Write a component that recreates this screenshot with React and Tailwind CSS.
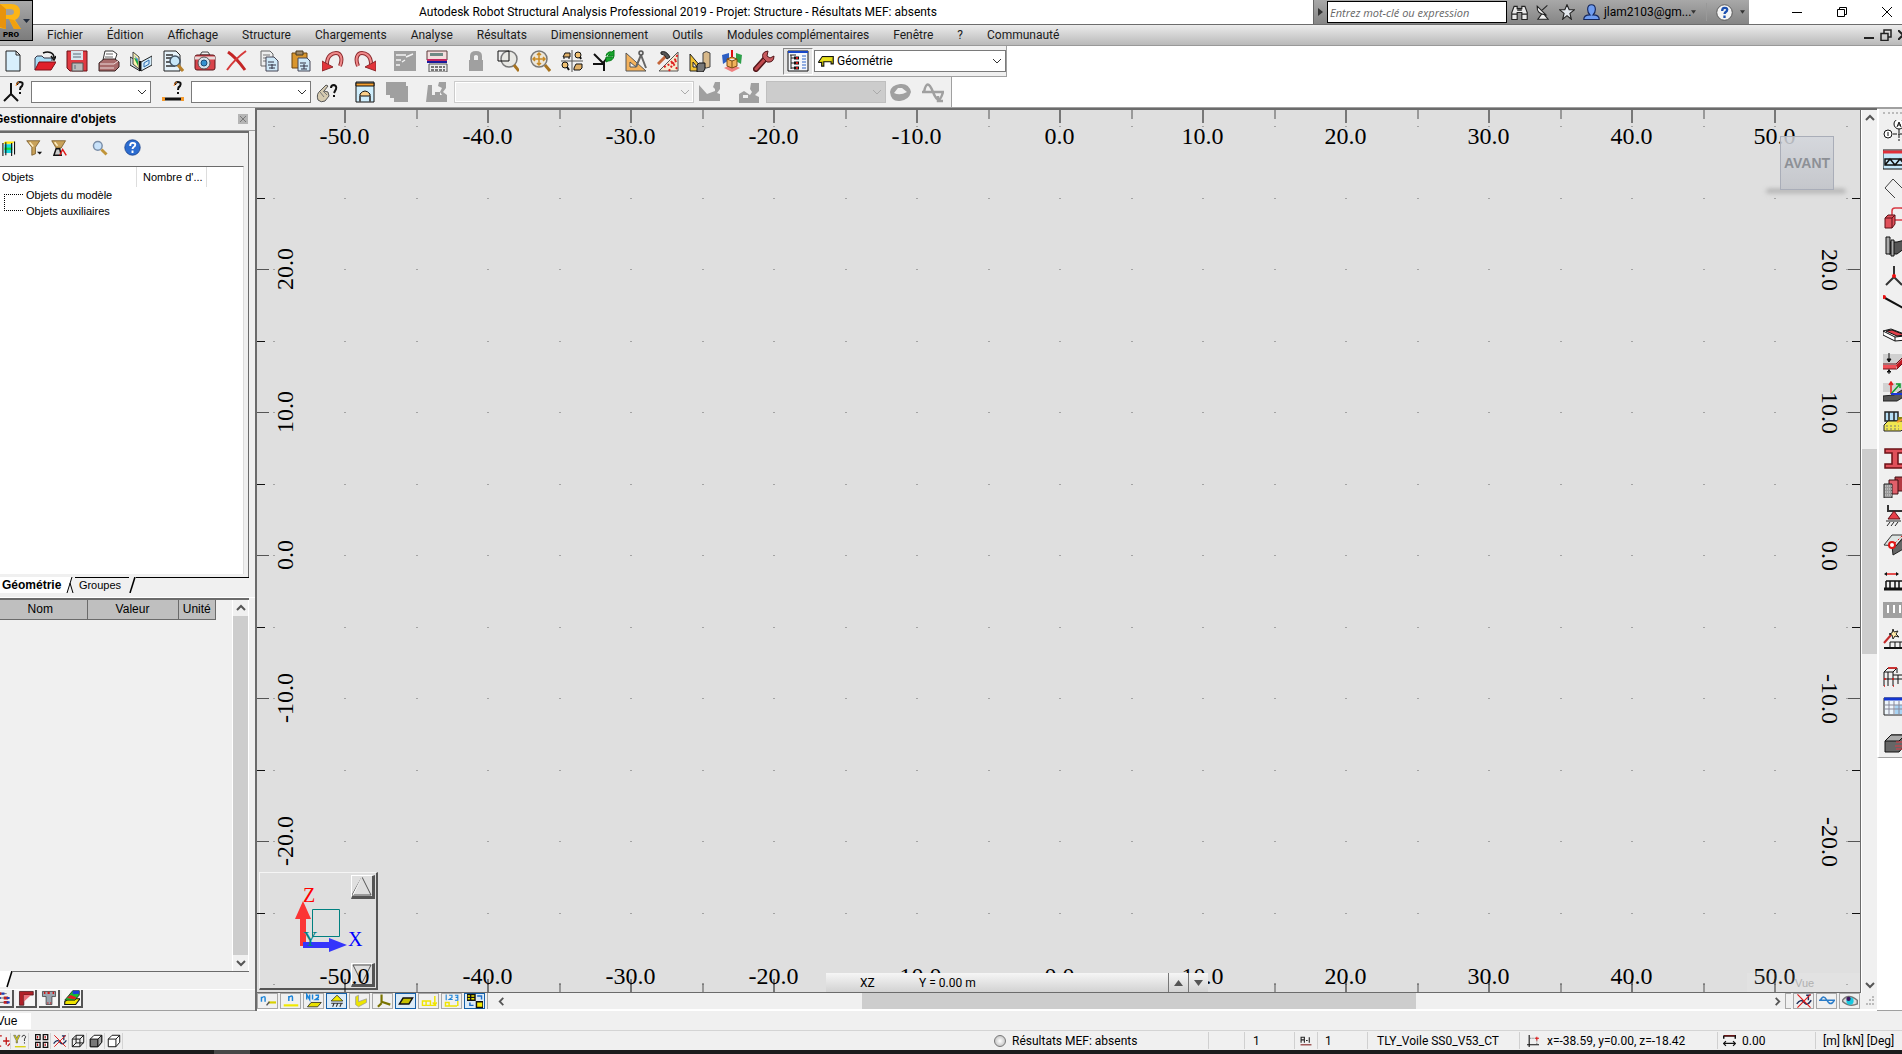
import { useState } from "react";

const MENUS = [
  "Fichier", "Édition", "Affichage", "Structure", "Chargements", "Analyse", "Résultats",
  "Dimensionnement", "Outils", "Modules complémentaires", "Fenêtre", "?", "Communauté",
];

const GREY = "#a0a0a0";

// every glyph is drawn on a 22x22 grid
const GLYPHS = {
  new: <path d="M4 1h10l4 4v16H4z M14 1v4h4" fill="#d8effc" stroke="#222" />,
  open: (
    <>
      <path d="M1 20V8l2-2h5l2 2h8v3" fill="#a9dcf5" stroke="#334" />
      <path d="M1 20l4-8h17l-5 8z" fill="#e0202c" stroke="#801018" />
      <path d="M9 3c5-2 11-1 11 5M17 6l3 4 2-4" fill="none" stroke="#111" strokeWidth="1.5" />
    </>
  ),
  save: (
    <>
      <path d="M1 1h20v20H4l-3-3z" fill="#e03a42" stroke="#6b1016" />
      <path d="M5 1h12v9H5z" fill="#d9e6ee" />
      <path d="M6 13h11v8H6z" fill="#bbb" stroke="#555" />
      <path d="M7 4h8M7 7h8M9 15v4" stroke="#5c6b78" />
    </>
  ),
  print: (
    <>
      <path d="M7 1h8l4 3-2 6H5z" fill="#fff" stroke="#333" />
      <path d="M8 4h7M7 7h8" stroke="#666" />
      <path d="M1 13l5-4h11l4 3v5l-4 4H1z" fill="#a86b6b" stroke="#3a2222" />
      <path d="M2 14h14l4-3M2 18h14" stroke="#eedcdc" fill="none" />
    </>
  ),
  book: (
    <>
      <path d="M0 7l10 5v9L0 15z" fill="#cfd8de" stroke="#222" />
      <path d="M3 2l6 5v12l-6-5z" fill="#fff3b0" stroke="#444" />
      <path d="M4 8l4 8V9z" fill="#1dad3a" />
      <path d="M4 5l4 4v3z" fill="#4b8fe0" />
      <path d="M11 12l11-6v9l-11 6z" fill="#d4ecfa" stroke="#222" />
      <path d="M14 13l5-3v4l-5 3z" fill="none" stroke="#2f6fb0" />
      <path d="M10 11v10" stroke="#111" strokeWidth="2" />
    </>
  ),
  preview: (
    <>
      <path d="M2 1h12l4 4v16H2z" fill="#e6f3fb" stroke="#222" />
      <path d="M4 5h7M4 8h6M4 12h5M4 16h9" stroke="#333" strokeWidth="1.5" />
      <circle cx="13" cy="11" r="5" fill="#c6e6f8" stroke="#456" strokeWidth="1.5" />
      <path d="M16 15l5 6" stroke="#b9812c" strokeWidth="3" />
    </>
  ),
  camera: (
    <>
      <path d="M6 5l2-3h6l2 3z" fill="#eee" stroke="#444" />
      <rect x="1" y="5" width="20" height="15" rx="2" fill="#d9434a" stroke="#58161a" />
      <path d="M1 8h20" stroke="#e8d8d8" strokeWidth="3" />
      <circle cx="10" cy="13" r="6" fill="#d8e2ea" stroke="#555" />
      <circle cx="10" cy="13" r="3" fill="#3490cf" stroke="#1b4b75" />
    </>
  ),
  cross: (
    <>
      <path d="M2 2c6 4 12 11 17 18" stroke="#c42626" strokeWidth="3" fill="none" />
      <path d="M20 1C13 6 6 13 1 20" stroke="#d63a3a" strokeWidth="2" fill="none" />
    </>
  ),
  copy: (
    <>
      <path d="M3 1h9l3 3v12H3z" fill="#eee" stroke="#666" />
      <path d="M5 5h7M5 8h7M5 11h4" stroke="#777" />
      <path d="M8 7h8l4 4v10H8z" fill="#cfe9f8" stroke="#445" />
      <path d="M10 12h6M10 15h8M11 18h6M14 14v5" stroke="#334" />
    </>
  ),
  paste: (
    <>
      <path d="M2 3h15v15H2z" fill="#d9962e" stroke="#6b4510" />
      <path d="M6 1h7v4H6z" fill="#a08a6a" stroke="#4b3a1e" />
      <path d="M8 8h9l3 3v10H8z" fill="#cfe9f8" stroke="#445" />
      <path d="M10 13h6M10 16h8M11 19h6M14 14v5" stroke="#334" />
    </>
  ),
  undo: (
    <>
      <path d="M5 14C5 5 11 3 14 3c5 0 7 6 4 13" fill="none" stroke="#8c2a2e" strokeWidth="4" />
      <path d="M5 14C5 5 11 3 14 3c5 0 7 6 4 13" fill="none" stroke="#f08a8a" strokeWidth="2" />
      <path d="M0 11v10l11-4z" fill="#e2343a" stroke="#8c2a2e" />
    </>
  ),
  redo: (
    <>
      <path d="M17 14C17 5 11 3 8 3 3 3 1 9 4 16" fill="none" stroke="#8c2a2e" strokeWidth="4" />
      <path d="M17 14C17 5 11 3 8 3 3 3 1 9 4 16" fill="none" stroke="#f08a8a" strokeWidth="2" />
      <path d="M22 11v10l-11-4z" fill="#e2343a" stroke="#8c2a2e" />
    </>
  ),
  sheetOff: (
    <>
      <path d="M0 1h22v20H0z" fill={GREY} />
      <path d="M2 5h10M2 10h5M2 15h4M12 7l7-3M8 12l3-2" stroke="#f3f3f3" strokeWidth="1.5" />
    </>
  ),
  calc: (
    <>
      <path d="M1 1h20v9H1z" fill="#f3dede" stroke="#5c3a3a" />
      <path d="M4 3h13v3H4z" fill="#6f8a85" />
      <path d="M1 9h20v2H1z" fill="#c6265e" />
      <path d="M1 12h20" stroke="#1b1b9c" strokeWidth="2" />
      <path d="M3 14h18v8H3z" fill="#eee" stroke="#555" />
      <path d="M5 17h14M5 20h14" stroke="#777" strokeDasharray="3 1" strokeWidth="2" />
    </>
  ),
  lock: <path d="M4 21V10h1V6q0-5 6-5t6 5v4h1v11z M9 10h4V6q-2-2-4 0z" fill={GREY} fillRule="evenodd" />,
  zoomWin: (
    <>
      <circle cx="12" cy="9" r="8" fill="#e8e8e4" stroke="#777" strokeWidth="1.5" />
      <path d="M1 1h11v10H1z" fill="none" stroke="#111" />
      <path d="M17 15l5 6" stroke="#a8731f" strokeWidth="3" />
    </>
  ),
  zoomAll: (
    <>
      <circle cx="10" cy="9" r="8" fill="#ece6d8" stroke="#777" strokeWidth="1.5" />
      <path d="M10 3v12M4 9h12M8 5l2-2 2 2M8 13l2 2 2-2M6 7L4 9l2 2M14 7l2 2-2 2" stroke="#c98a24" strokeWidth="1.5" fill="none" />
      <path d="M16 15l5 6" stroke="#a8731f" strokeWidth="3" />
    </>
  ),
  views: (
    <>
      <path d="M0 11h22M11 0v22" stroke="#555" />
      <path d="M2 7l2-4h5v4z M3 7v2M8 7v2M13 18l2-4h6v4l-2 2h-6z" fill="#e0b068" stroke="#111" />
      <circle cx="17" cy="5" r="3" fill="#f0c070" stroke="#111" />
      <circle cx="4" cy="15" r="3" fill="#f0c070" stroke="#111" />
      <path d="M6 17l2 3M19 7l1 2" stroke="#111" strokeWidth="2" />
    </>
  ),
  rotate: (
    <>
      <path d="M1 4l9 9M0 14h12M11 12v9M10 13l4-5" stroke="#111" strokeWidth="2" />
      <path d="M13 6q1-5 6-4l2-2v6h-6l2-2M21 6q-1 5-6 5l-2 1V7h6" fill="#16a52c" stroke="#0b7d1c" />
    </>
  ),
  compass: (
    <>
      <path d="M1 3v18h20z M5 12v5h6z" fill="#f4b25c" fillRule="evenodd" stroke="#555" />
      <path d="M16 5l-5 12M16 5l5 13" stroke="#666" strokeWidth="2" />
      <circle cx="16" cy="3" r="2" fill="#ddd" stroke="#555" strokeWidth="1.5" />
    </>
  ),
  hammer: (
    <>
      <path d="M2 21L21 2v19z" fill="#f7ead0" stroke="#555" />
      <path d="M7 17l14-7M12 21l9-17M14 11l7 9" stroke="#d22" strokeDasharray="2 2" strokeWidth="2" />
      <path d="M1 14l9-9" stroke="#c4663a" strokeWidth="3" />
      <path d="M4 2q5-2 9 5l-3 2Q8 4 4 4z" fill="#555" stroke="#222" />
    </>
  ),
  solids: (
    <>
      <path d="M1 4l11 13v4H1z M4 12v5h4z" fill="#f2c233" fillRule="evenodd" stroke="#222" />
      <path d="M14 3q3-3 7 0v14q-4 2-7 0z" fill="#d8b98a" stroke="#444" />
      <path d="M8 15l2-2h6v6l-2 3H8z" fill="#777" stroke="#111" />
    </>
  ),
  cube3d: (
    <>
      <path d="M1 5l7-2v7l-6 4z" fill="#2c5fc4" />
      <path d="M21 5l-6-2v8l5 3z" fill="#2ea04a" />
      <path d="M3 18l8-4 8 4-8 4z" fill="#f08080" />
      <path d="M6 9l5-2 5 2v7l-5 2-5-2z M6 9l5 2 5-2M11 11v7" fill="#f2b25a" stroke="#7a4a12" />
      <path d="M11 0v7" stroke="#e01010" strokeWidth="2" />
    </>
  ),
  wrench: (
    <>
      <path d="M3 19l9-10" stroke="#54171a" strokeWidth="6" strokeLinecap="round" />
      <path d="M3 19l9-10" stroke="#c04a4e" strokeWidth="3" strokeLinecap="round" />
      <path d="M10 8q-2-6 5-7l-1 5 3 2 4-2q0 7-7 6z" fill="#c75a5e" stroke="#54171a" />
    </>
  ),
  manager: (
    <>
      <path d="M1 1h20v20H1z" fill="#f4f7fb" stroke="#111" />
      <path d="M1 2h20" stroke="#1746c8" strokeWidth="2" />
      <path d="M3 5h6M4 5v14M4 8h4M4 13h4M4 18h4" stroke="#222" />
      <path d="M7 8h5M7 13h5M7 18h5" stroke="#111" strokeWidth="3" />
      <path d="M9 8h2M9 13h2M9 18h2" stroke="#d01a1a" strokeWidth="2" />
      <path d="M15 6h4M15 9h4M15 12h4M15 15h4M15 18h4" stroke="#2c62c8" />
    </>
  ),
  nodeHelp: (
    <>
      <path d="M8 2v11M8 13l-7 7M8 13l7 7" stroke="#111" strokeWidth="2" fill="none" />
      <path d="M14 4q0-3 3-3 4 0 2 4-2 1-2 4M17 11v2" stroke="#111" strokeWidth="2" fill="none" />
      <path d="M13 5q0-3 3-4" stroke="#f08020" fill="none" />
    </>
  ),
  barHelp: (
    <>
      <path d="M1 18h20" stroke="#111" strokeWidth="3" />
      <path d="M0 16h3v4H0zM19 16h3v4h-3z" fill="#f59a2c" />
      <path d="M13 4q0-3 3-3 4 0 2 4-2 1-2 4M16 11v2" stroke="#111" strokeWidth="2" fill="none" />
      <path d="M12 5q0-3 3-4" stroke="#f08020" fill="none" />
    </>
  ),
  handHelp: (
    <>
      <path d="M2 19q-2-6 2-9l6-6 2 1-4 5 4 1 1 4-4 5q-4 2-7-1z" fill="#d6cbb0" stroke="#555" />
      <path d="M4 11l4 5M7 10l4 4" stroke="#777" />
      <path d="M15 7q0-3 3-3 3 1 2 4l-2 4M18 14v2" stroke="#111" strokeWidth="2" fill="none" />
    </>
  ),
  house: (
    <>
      <path d="M2 1h18v20H2z" fill="#cfeefc" stroke="#111" />
      <path d="M2 2h18v3H2z" fill="#f5a030" stroke="#111" />
      <path d="M6 15v-2q5-6 10 0v2z" fill="#fbd08a" stroke="#111" />
      <path d="M6 15v6M16 15v6" stroke="#555" strokeWidth="2" />
    </>
  ),
  planeOff: <path d="M0 1h20v4h2v16H8v-4H4v-3H0z" fill={GREY} />,
  caseOff: <path d="M2 4h4v10h3v-3h5v3h2l-2-3 2-4-4-2 1-4h7v6l-3 4 4 3v7H0z" fill={GREY} />,
  modeOff: <path d="M1 4l8 9 8-3v-2l-2-2 2-5h5v7l-3 4 3 1v7H1z" fill={GREY} />,
  compOff: <path d="M1 13l5-3 6 4 2-3-2-3 1-6h8v8l-4 4 4 2v6H1z M5 14h5v3H5z" fill={GREY} fillRule="evenodd" />,
  massOff: <path d="M1 11Q2 4 11 3t11 8q-2 8-11 9T1 11z M5 12q6 3 13-1l-5-4H9z" fill={GREY} fillRule="evenodd" />,
  waveOff: <path d="M0 11h22M2 11Q5-4 11 11t10 0M16 15v5h5" stroke={GREY} strokeWidth="2.5" fill="none" />,
  axes: (
    <>
      <circle cx="5" cy="14" r="4" fill="#fff" stroke="#111" />
      <path d="M5 12v4M10 14h12M16 9v12" stroke="#111" strokeDasharray="4 1" />
      <circle cx="16" cy="4" r="5" fill="#fff" stroke="#111" />
      <path d="M14 7l2-5 2 5M15 5h3" stroke="#111" fill="none" />
    </>
  ),
  truss: (
    <>
      <path d="M0 1h22v19H0z" fill="#c6e8fa" stroke="#111" />
      <path d="M0 2h22v2H0z" fill="#e0303a" stroke="#e0303a" />
      <path d="M2 10h20v6H2zM2 16l5-6 5 6 5-6 5 6" fill="none" stroke="#111" strokeWidth="1.5" />
    </>
  ),
  poly: <path d="M12 20L2 10l8-9 12 12" fill="none" stroke="#444" />,
  extrude: (
    <>
      <rect x="9" y="1" width="12" height="12" rx="3" fill="none" stroke="#d83a44" strokeWidth="1.5" />
      <path d="M2 11l3-3h7v9l-3 4H2z M2 11h7v10M9 11l3-3" fill="#e0505a" stroke="#5c1016" />
    </>
  ),
  slabs: (
    <>
      <path d="M6 6h8l8-2v8l-8 6H6z" fill="#555" stroke="#111" />
      <path d="M3 1h4v17H3zM8 4h3v16H8z" fill="#aaa" stroke="#111" />
    </>
  ),
  node: (
    <>
      <path d="M11 1v11M11 12l-8 8M11 12l8 8" stroke="#333" strokeWidth="2" />
      <circle cx="11" cy="11" r="2" fill="#f01010" />
    </>
  ),
  bar: (
    <>
      <path d="M2 4l20 11" stroke="#111" strokeWidth="2" />
      <circle cx="1" cy="3" r="2" fill="#e81010" />
    </>
  ),
  panel: (
    <>
      <path d="M0 8l8-2 16 6v5l-12 1L0 12z" fill="#fff" stroke="#111" />
      <path d="M3 8l6-1 13 5-8 1z" fill="#e0404a" stroke="#111" />
      <path d="M0 8l12 6 10-1M12 14v4" stroke="#111" />
    </>
  ),
  thickness: (
    <>
      <path d="M0 2h22v6l-8 6H0z" fill="#d0d0d0" />
      <path d="M0 13h13v4H0z" fill="#f05058" />
      <path d="M13 13l9-9v5l-8 8z" fill="#c01820" />
      <path d="M0 12h13l8-8M0 17h14l8-8" stroke="#701018" fill="none" />
      <path d="M6 1v7M4 7l2 3 2-3zM6 17v5M4 20l2-2 2 2z" stroke="#111" fill="#111" />
    </>
  ),
  local: (
    <>
      <path d="M0 2h22v9H0z" fill="#d2d2d2" />
      <path d="M0 15l11-1 8-5 3 1v5l-8 5H0z" fill="#555" stroke="#222" />
      <path d="M8 13V2M6 4l2-3 2 3" stroke="#e02020" fill="none" strokeWidth="1.5" />
      <path d="M8 13l9-10M13 3h4v4" stroke="#12a030" fill="none" strokeWidth="1.5" />
      <path d="M8 13h14" stroke="#1a36d8" strokeWidth="2" />
    </>
  ),
  material: (
    <>
      <path d="M2 2h13v9H2zM6 2v9M11 2v9" fill="#b6def5" stroke="#222" strokeWidth="1.5" />
      <path d="M15 7h7v6h-7z" fill="#8a8410" />
      <path d="M1 15l4-4h17v6l-4 4H1z" fill="#f0e650" stroke="#222" />
      <path d="M3 16h13M3 19h13" stroke="#777" strokeDasharray="2 2" />
      <path d="M14 12l8-4" stroke="#f59a2c" strokeWidth="2" />
    </>
  ),
  section: <path d="M2 2h20v4h-7v11h7v4H2v-4h7V6H2z" fill="#e0505a" stroke="#6b1016" strokeWidth="1.5" />,
  plates: (
    <>
      <path d="M12 1h10v14H12z" fill="#b43a42" stroke="#401014" />
      <path d="M6 4h9v14H6z" fill="#e0606a" stroke="#401014" />
      <path d="M1 8h8v14H1z" fill="#999" stroke="#222" />
      <path d="M2 10h7M2 13h7M2 16h7M2 19h7" stroke="#ddd" strokeDasharray="1 1" />
    </>
  ),
  support: (
    <>
      <path d="M5 0v6h17" stroke="#333" strokeWidth="2" fill="none" />
      <path d="M11 6l6 8H5z" fill="#e8404a" stroke="#5c1016" />
      <path d="M3 16h15M7 17l-3 4M11 17l-3 4M15 17l-3 4" stroke="#222" />
    </>
  ),
  release: (
    <>
      <path d="M1 11L9 1h13l-9 11z" fill="#dde4e2" stroke="#333" />
      <path d="M9 12h4l9-10v12l-12 7z" fill="#666" stroke="#222" />
      <path d="M12 9l8-8" stroke="#e01818" strokeDasharray="2 2" />
      <circle cx="9" cy="11" r="3" fill="#fff" stroke="#e01818" strokeWidth="2" />
    </>
  ),
  loads: (
    <>
      <path d="M3 3h12" stroke="#e01818" strokeWidth="1.5" />
      <path d="M4 1L1 3l3 2zM13 1l3 2-3 2z" fill="#111" />
      <path d="M1 18h21" stroke="#111" strokeWidth="3" />
      <path d="M3 10h18v7M3 10v7M7 10v7M12 10v7M16 10v7M20 3v13" fill="none" stroke="#111" strokeWidth="1.5" />
    </>
  ),
  loadsOff: (
    <>
      <path d="M0 2h22v16H0z" fill={GREY} />
      <path d="M5 5v8M11 5v8M17 5v8" stroke="#fff" strokeWidth="2" />
    </>
  ),
  wizard: (
    <>
      <path d="M1 14l7-8" stroke="#c22a2a" strokeWidth="2" />
      <path d="M10 0l1 3 4-1-2 3 3 3-4-1-2 3-1-4-3-1 3-1z" fill="#ffe9a8" stroke="#222" />
      <path d="M1 19h21" stroke="#111" strokeWidth="2" />
      <path d="M7 18v-5h15M12 13v5M17 13v5" fill="none" stroke="#111" />
    </>
  ),
  frame3d: (
    <>
      <path d="M1 20V6h9v14M1 13h21M5 6v14M15 9v9M10 9h12" fill="none" stroke="#111" />
      <path d="M1 6l4-4h9v5M10 6l4-4" fill="none" stroke="#111" />
      <path d="M5 2h9M1 20h1M10 20h1M1 13h2M9 13h2" stroke="#e01818" strokeWidth="1.5" />
    </>
  ),
  table: (
    <>
      <path d="M1 3h21v17H1z" fill="#eef6fc" stroke="#222" />
      <path d="M1 4h21" stroke="#1436d0" strokeWidth="3" />
      <path d="M12 10h9v9h-9z" fill="#a8d4f4" />
      <path d="M1 10h21M1 14h21M6 6v14M11 6v14M16 6v14" stroke="#889" />
    </>
  ),
  block: (
    <>
      <path d="M2 9l6-6h14v10l-6 7H2z" fill="#666" stroke="#111" />
      <path d="M2 9l6-6h14l-6 6z" fill="#aaa" stroke="#111" />
      <path d="M13 10h9M12 14h10M13 17h9" stroke="#e03a44" />
    </>
  ),
  rack: (
    <>
      <path d="M7 2h13l-3 3H4z" fill="#ffe800" />
      <path d="M6 6h11v5H6zM6 12h11v6H6z" fill="#12d8e0" />
      <path d="M6 12h11" stroke="#12e030" strokeWidth="3" />
      <path d="M4 4v18M8 3v18M16 4v18M20 2v18" stroke="#111" strokeWidth="1.5" />
    </>
  ),
  funnel: (
    <>
      <path d="M1 1h18l-6 9v9l-5 2V10z" fill="#c9a25a" stroke="#6b4c18" />
      <path d="M5 3l5 6" stroke="#fff0c8" strokeWidth="2" />
      <path d="M15 16h7l-3 4z" fill="#111" />
    </>
  ),
  funnelOff: (
    <>
      <path d="M1 1h19l-6 10H7z" fill="#c9a25a" stroke="#6b4c18" />
      <path d="M5 3l4 5" stroke="#fff0c8" strokeWidth="2" />
      <path d="M4 21l3-9h5l2 9z" fill="#ccc" stroke="#111" strokeWidth="2" />
      <path d="M12 21l4-8 5 8" fill="none" stroke="#e01818" strokeWidth="2" />
    </>
  ),
  find: (
    <>
      <circle cx="8" cy="8" r="6" fill="#c8e2fa" stroke="#7a8ea8" strokeWidth="2" />
      <path d="M13 13l7 7" stroke="#c09438" strokeWidth="4" />
    </>
  ),
  help: (
    <>
      <circle cx="11" cy="11" r="10" fill="#2c6cd0" stroke="#123c88" />
      <path d="M8 9q0-4 3-4 5 0 3 4-3 2-3 4M11 15v3" stroke="#fff" strokeWidth="2.5" fill="none" />
    </>
  ),
  layoutCar: (
    <>
      <path d="M1 12l5-7h15v10h-3v-3H8v6H5v-5H1z" fill="#c8c000" stroke="#111" strokeWidth="1.5" />
      <path d="M6 6h14l-2 5H3z" fill="#e8e020" />
    </>
  ),
  nBar: (
    <>
      <path d="M2 12V5M2 7q5-4 5 0v5" stroke="#1c84d8" strokeWidth="2" fill="none" />
      <path d="M12 13h10" stroke="#d8d000" strokeWidth="3" />
      <path d="M9 17l4-5" stroke="#555" strokeWidth="2" />
    </>
  ),
  nLine: (
    <>
      <path d="M8 11V4M8 6q5-4 5 0v5" stroke="#1c84d8" strokeWidth="2" fill="none" />
      <path d="M1 17h20" stroke="#f0e800" strokeWidth="3" />
    </>
  ),
  n12: (
    <>
      <path d="M1 9V2l4 7V2M9 2v7M13 3h4v3l-4 3h5" stroke="#1c84d8" strokeWidth="2" fill="none" />
      <path d="M2 19l5-6h14l-5 6z" fill="#e8e000" stroke="#111" />
    </>
  ),
  supportY: (
    <>
      <path d="M11 3l8 8H3z" fill="#f4ec00" stroke="#111" />
      <path d="M3 14h16M7 14l-2 5M12 14l-2 5M17 14l-2 5" stroke="#333" strokeWidth="1.5" />
    </>
  ),
  angle: <path d="M5 5l4-2v9l11-4v5L9 19l-4-3z" fill="#ece400" stroke="#999" />,
  tripod: <path d="M9 2v12M9 14l-5 5M9 12l12 4" stroke="#7a7400" strokeWidth="3" fill="none" />,
  slabY: <path d="M2 15l5-8h13l-5 8z" fill="#c8c000" stroke="#111" strokeWidth="2" />,
  loadY: <path d="M1 17h20M2 17v-6h5v6M7 11h6v6M19 4v12M16 13l3 3 3-3" stroke="#f0e400" strokeWidth="2" fill="none" />,
  n123: (
    <>
      <path d="M3 2v8M7 3h4v3l-4 3h5M15 3h4v7h-4M16 6h3" stroke="#1c84d8" strokeWidth="1.5" fill="none" />
      <path d="M1 18h17M2 18v-5h5v5M19 11v7" stroke="#f0e400" strokeWidth="2" fill="none" />
    </>
  ),
  swap: (
    <>
      <path d="M0 2h11v8H0zM13 12h9v8h-9z" fill="#f4ec00" stroke="#111" strokeWidth="2" />
      <path d="M5 2v8M0 6h11" stroke="#111" strokeWidth="2" />
      <path d="M14 4h6v5M9 17H4v-4" stroke="#1c6cc8" strokeWidth="2" fill="none" />
    </>
  ),
  axesOff: (
    <>
      <path d="M1 15q6-8 10-2t10-3M14 3h6M17 3v7" stroke="#1c2c58" strokeWidth="2" fill="none" />
      <path d="M2 2l18 18M20 2L2 20" stroke="#e01818" strokeWidth="1.5" />
    </>
  ),
  wave: <path d="M0 10h22M2 10q4-9 9 0t10 0" stroke="#2b7cc8" strokeWidth="2" fill="none" />,
  eye: (
    <>
      <path d="M0 11Q8-1 21 10v5Q10 20 0 11z" fill="#ddd" stroke="#777" strokeWidth="2" />
      <circle cx="11" cy="11" r="5" fill="#18c8e0" />
      <circle cx="9" cy="8" r="3" fill="#401860" />
    </>
  ),
  list: (
    <>
      <path d="M0 5h16M0 11h20M0 17h20" stroke="#444" />
      <path d="M4 5h5M12 11h6M12 17h6" stroke="#c02020" strokeWidth="4" />
      <path d="M9 5h4M16 11h4M16 17h4M4 11h4" stroke="#1c3cb8" strokeWidth="3" />
    </>
  ),
  gusset: (
    <>
      <path d="M2 2h19v5H8v14H2z" fill="#b02028" stroke="#401014" />
      <path d="M8 7h10l-10 9z" fill="#e8707a" />
    </>
  ),
  beamT: (
    <>
      <path d="M2 2h18v7h-5v11H7V9H2z" fill="#9aa4ae" stroke="#333" />
      <path d="M4 4h2M9 4h3M16 4h2M9 18h1M13 18h1" stroke="#d01818" strokeWidth="3" />
    </>
  ),
  layers: (
    <>
      <path d="M1 16l5-4h16l-6 8H1z" fill="#f0e400" stroke="#111" strokeWidth="1.5" />
      <path d="M1 14L12 1h9v6l-6 7z" fill="#18c030" stroke="#111" />
      <path d="M12 1h9v4l-9 1z" fill="#1c3cd8" />
      <path d="M4 11l5-4 8 3-2 3z" fill="#e02020" />
    </>
  ),
  snap: <path d="M0 3h6M13 5v12M8 11h10M2 19h3M15 19l4-4" stroke="#c01818" strokeWidth="2" fill="none" />,
  viewHelp: (
    <>
      <path d="M1 2l4 8v4h2v-4l4-8H8L6 7 4 2z" fill="#e8e000" stroke="#555" />
      <path d="M14 5q1-4 4-3 4 2 0 6v3M18 13v2" stroke="#333" strokeWidth="1.5" fill="none" />
      <path d="M3 20h17" stroke="#d8d000" strokeWidth="2" />
    </>
  ),
  tiles: (
    <>
      <path d="M1 1h7v8H1zM13 1h7v8h-7zM1 13h7v8H1zM13 13h7v8h-7z" fill="#fff" stroke="#111" strokeWidth="2" />
      <path d="M4 3v4M16 3v4M4 15v4M16 15v4" stroke="#b01818" strokeWidth="2" />
    </>
  ),
  wireCube: <path d="M2 8l6-6h12v11l-6 7H2zM2 8h12v12M14 8l6-6M8 2v12h12M8 14l-6 6" fill="none" stroke="#111" strokeWidth="1.5" />,
  darkCube: (
    <>
      <path d="M2 8l6-6h12v11l-6 7H2z" fill="#fff" stroke="#111" strokeWidth="1.5" />
      <path d="M2 8h12v12H2z" fill="#777" stroke="#111" strokeWidth="1.5" />
      <path d="M14 8l6-6v11l-6 7z" fill="#aaa" stroke="#111" strokeWidth="1.5" />
    </>
  ),
  whiteCube: <path d="M2 8l6-6h12v11l-6 7H2zM2 8h12v12M14 8l6-6" fill="#fff" stroke="#111" strokeWidth="1.5" />,
  binoculars: (
    <path d="M4 3h4v3h6V3h4l3 8v9h-7v-9H8v9H1v-9z M8 8h6M1 13h7M14 13h7" fill="#e8e8e8" stroke="#222" strokeWidth="1.5" />
  ),
  dish: (
    <path d="M3 3q-1 11 12 12L3 3zM9 9l8-7M9 14l-5 7h14l-5-6" fill="#f0f0f0" stroke="#222" strokeWidth="1.5" />
  ),
  star: <path d="M11 1l3 7h7l-6 5 2 8-6-5-6 5 2-8-6-5h7z" fill="#e4e8ee" stroke="#222" strokeWidth="1.5" />,
  user: (
    <path d="M11 1q5 0 5 6 0 4-3 7 8 0 8 6H1q0-6 8-6-3-3-3-7 0-6 5-6z" fill="#6f9cf0" stroke="#14265c" strokeWidth="1.5" />
  ),
  helpRound: (
    <>
      <circle cx="11" cy="11" r="10" fill="#f4f4f4" stroke="#444" />
      <path d="M8 9q0-4 3-4 5 0 3 4-3 2-3 4M11 15v3" stroke="#1c50b0" strokeWidth="3" fill="none" />
    </>
  ),
  label: (
    <>
      <path d="M2 14V4h6v10M2 9h6M11 10h3M17 4v10" stroke="#222" strokeWidth="2" fill="none" />
      <path d="M1 18h20" stroke="#802020" strokeWidth="2" />
    </>
  ),
  coords: (
    <>
      <path d="M4 0v22M0 18h22" stroke="#111" strokeWidth="2" />
      <path d="M6 6h12v12" fill="none" stroke="#666" strokeDasharray="2 2" strokeWidth="2" />
      <path d="M15 6h7M18 3v7" stroke="#e01818" strokeWidth="2" />
    </>
  ),
  dims: (
    <>
      <path d="M1 3h20v5M1 3v5" stroke="#111" strokeWidth="3" fill="none" />
      <path d="M2 3h18" stroke="#e01818" />
      <path d="M1 16h20M5 12l-4 4 4 4M17 12l4 4-4 4" stroke="#111" strokeWidth="2" fill="none" />
    </>
  ),
};

function Glyph({ name, className = "size-[22px]" }) {
  return (
    <svg viewBox="0 0 22 22" fill="none" className={`shrink-0 ${className}`} aria-hidden="true">
      {GLYPHS[name]}
    </svg>
  );
}

function Tool({ name, className = "w-8 h-7", size }) {
  return (
    <button aria-label={name} className={`flex shrink-0 items-center justify-center ${className}`}>
      <Glyph name={name} className={size} />
    </button>
  );
}

function Chevron({ dir = "down", className = "size-[10px] text-[#555]", strokeWidth = 2 }) {
  const d = { down: "M1 3l4 4 4-4", up: "M1 7l4-4 4 4", left: "M7 1L3 5l4 4", right: "M3 1l4 4-4 4" }[dir];
  return (
    <svg viewBox="0 0 10 10" className={`shrink-0 ${className}`} fill="none" stroke="currentColor" strokeWidth={strokeWidth} aria-hidden="true">
      <path d={d} />
    </svg>
  );
}

function Combo({ label, className, disabled, selectClass = "bg-white border-[#7a7a7a]", options = [], icon }) {
  return (
    <label className={`relative block h-[22px] shrink-0 ${className}`}>
      <span className="sr-only">{label}</span>
      <select disabled={disabled} aria-label={label} className={`block h-full w-full appearance-none border text-[12px] leading-4 text-black ${icon ? "pl-[22px]" : "pl-1"} ${selectClass}`}>
        {options.map((o) => <option key={o}>{o}</option>)}
      </select>
      {icon && <span className="pointer-events-none absolute left-1 top-[3px]"><Glyph name={icon} className="size-4" /></span>}
      <span className="pointer-events-none absolute right-1 top-[6px]">
        <Chevron strokeWidth={1} className={disabled ? "size-[10px] text-[#aaa]" : "size-[10px] text-[#333]"} />
      </span>
    </label>
  );
}

function TitleBar() {
  return (
    <header className="relative shrink-0">
      <div className="flex h-6 items-stretch bg-white">
        <h1 className="flex flex-1 items-center justify-center pl-[43px] text-[12px]">
          Autodesk Robot Structural Analysis Professional 2019 - Projet: Structure - Résultats MEF: absents
        </h1>
        <div className="flex w-[436px] items-center border-l border-[#666] bg-linear-to-b from-[#a8a8a8] to-[#858585]">
          <button aria-label="Réduire la recherche" className="flex w-[13px] shrink-0 justify-center">
            <svg viewBox="0 0 5 8" className="h-2 w-[5px]"><path d="M0 0l5 4-5 4z" fill="#333" /></svg>
          </button>
          <input
            aria-label="Recherche"
            placeholder="Entrez mot-clé ou expression"
            className="h-[22px] w-[180px] shrink-0 border border-black bg-white px-[2px] font-['Open_Sans',sans-serif] text-[11px] italic placeholder:text-[#666]"
          />
          <Tool name="binoculars" className="w-6 h-5" size="size-[17px]" />
          <Tool name="dish" className="w-6 h-5" size="size-4" />
          <Tool name="star" className="w-6 h-5" size="size-4" />
          <button className="flex shrink-0 items-center gap-1 pl-1 text-[12px]">
            <Glyph name="user" className="size-[17px]" />
            jlam2103@gm...
            <svg viewBox="0 0 6 4" className="-ml-1 h-1 w-[5px]"><path d="M0 0h6L3 4z" fill="#333" /></svg>
          </button>
          <div className="ml-auto flex items-center pr-1">
            <span className="h-[18px] border-l border-[#999]" />
            <button aria-label="Aide" className="ml-[9px] flex items-center gap-[7px]">
              <Glyph name="helpRound" className="size-[17px]" />
              <svg viewBox="0 0 6 4" className="h-1 w-[5px]"><path d="M0 0h6L3 4z" fill="#333" /></svg>
            </button>
          </div>
        </div>
        <div className="flex w-[153px] items-center justify-end gap-[35px] pr-[10px]">
          <button aria-label="Réduire"><svg viewBox="0 0 10 10" className="size-[10px]"><path d="M0 5.5h10" stroke="#000" /></svg></button>
          <button aria-label="Restaurer">
            <svg viewBox="0 0 10 10" className="size-[10px]" fill="none" stroke="#000"><path d="M.5 2.5h7v7h-7zM2.5 2.5v-2h7v7h-2" /></svg>
          </button>
          <button aria-label="Fermer"><svg viewBox="0 0 10 10" className="size-[10px]" stroke="#000"><path d="M0 0l10 10M10 0L0 10" /></svg></button>
        </div>
      </div>
      <nav className="flex h-[22px] items-center gap-6 border-y border-t-[#6d6d6d] border-b-[#999] bg-linear-to-b from-[#ececec] to-[#b9b9b9] pl-[47px] text-[12px] text-[#1b1b1b]">
        {MENUS.map((m) => <button key={m} className="leading-5">{m}</button>)}
        <div className="ml-auto flex gap-[6px] overflow-hidden">
          <button aria-label="Réduire la vue"><svg viewBox="0 0 10 10" className="size-[10px]"><path d="M0 8h10" stroke="#222" strokeWidth="2" /></svg></button>
          <button aria-label="Restaurer la vue">
            <svg viewBox="0 0 12 12" className="size-3" fill="none" stroke="#222" strokeWidth="1.5"><path d="M1 4.500h7v7H1zM4 4V1h7v7H8" /></svg>
          </button>
          <button aria-label="Fermer la vue" className="w-1 overflow-hidden">
            <svg viewBox="0 0 10 10" className="size-[10px]" stroke="#222" strokeWidth="2"><path d="M0 0l10 10M10 0L0 10" /></svg>
          </button>
        </div>
      </nav>
      <button aria-label="Menu de l'application" className="absolute left-0 top-0 h-[41px] w-[33px] overflow-hidden border border-l-0 border-black bg-linear-to-b from-[#a9a9a9] to-[#7c7c7c]">
        <svg viewBox="0 0 32 39" className="h-[39px] w-8">
          <path d="M1 3h10q9 0 9 8 0 6-5 8l6 9h-7L9 18H6v10l-6-1V3z" fill="#fdb515" />
          <path d="M6 8v6h4q4 0 4-3t-4-3z" fill="#a0a0a0" />
          <path d="M0 3l6 5v20l-6-2z" fill="#e8930c" />
          <path d="M9 18l5 10h7l-7-9z" fill="#f0a010" />
          <path d="M23 18h7l-3.500 4z" fill="#222c3c" />
        </svg>
        <span className="absolute bottom-0 left-[3px] text-[8px] font-black leading-[10px]">PRO</span>
      </button>
    </header>
  );
}

const FILE_TOOLS = ["new", "open", "save", "print", "book", "preview", "camera", "cross", "copy", "paste", "undo", "redo"];
const VIEW_TOOLS = ["lock", "zoomWin", "zoomAll", "views", "rotate", "compass", "hammer", "solids", "cube3d", "wrench"];

function Toolbars() {
  return (
    <div className="shrink-0 bg-white">
      <div className="flex h-[31px] w-[1007px] items-center border-b border-r border-[#a0a0a0] bg-[#f0f0f0]">
        <div className="-ml-[3px] flex">{FILE_TOOLS.map((t) => <Tool key={t} name={t} />)}</div>
        <div className="ml-2 flex"><Tool name="sheetOff" /><Tool name="calc" /></div>
        <div className="ml-[7px] flex">{VIEW_TOOLS.map((t) => <Tool key={t} name={t} />)}</div>
        <button aria-label="Gestionnaire" aria-pressed="true" className="ml-[3px] flex h-[27px] w-[30px] items-center justify-center border border-[#888] border-b-white border-r-white bg-[#e6e6e6]">
          <Glyph name="manager" />
        </button>
        <Combo label="Bureau" className="ml-px flex-1" icon="layoutCar" options={["Géométrie"]} />
      </div>
      <div className="border-b border-[#a0a0a0]">
        <div className="flex h-[30px] w-[952px] items-center border-r border-[#a0a0a0] bg-[#f0f0f0] pb-px">
          <Tool name="nodeHelp" className="-ml-1 w-[35px] h-7" />
          <Combo label="Noeuds" className="w-[120px]" />
          <Tool name="barHelp" className="w-10 h-7 pl-1" />
          <Combo label="Barres" className="w-[120px]" />
          <Tool name="handHelp" className="w-8 h-7" />
          <Tool name="house" className="ml-[6px] w-8 h-7" />
          <Tool name="planeOff" className="w-[31px] h-7" />
          <Tool name="caseOff" className="ml-[10px] w-[30px] h-7" />
          <Combo label="Cas" disabled className="ml-[2px] w-[240px]" selectClass="bg-[#f0f0f0] border-2 border-white outline outline-[#ccc] -outline-offset-1" />
          <Tool name="modeOff" className="w-[29px] h-7" />
          <Tool name="compOff" className="ml-[10px] w-[31px] h-7" />
          <Combo label="Modes" disabled className="ml-[2px] w-[120px]" selectClass="bg-[#cccccc] border-[#bfbfbf]" />
          <Tool name="massOff" className="w-7 h-7" />
          <Tool name="waveOff" className="ml-[3px] w-8 h-7" />
        </div>
      </div>
    </div>
  );
}

function ScrollColumn({ className, thumb }) {
  return (
    <div className={`flex flex-col items-center bg-[#f0f0f0] ${className}`}>
      <button aria-label="Défiler vers le haut" className="flex h-4 w-full items-center justify-center"><Chevron dir="up" /></button>
      <div className="relative w-full flex-1">{thumb}</div>
      <button aria-label="Défiler vers le bas" className="flex h-4 w-full items-center justify-center"><Chevron /></button>
    </div>
  );
}

function ObjectManager() {
  return (
    <aside className="flex w-[255px] shrink-0 flex-col overflow-hidden border-b border-[#a0a0a0] bg-[#f0f0f0] font-['Liberation_Sans',sans-serif] text-[11px]">
      <div className="flex h-[23px] shrink-0 items-center justify-between border-b border-[#a0a0a0] pr-[7px]">
        <h2 className="-ml-[6px] text-[12px] font-bold">Gestionnaire d'objets</h2>
        <button aria-label="Fermer le gestionnaire" className="flex size-[10px] items-center justify-center bg-[#b5b5b5]">
          <svg viewBox="0 0 8 8" className="size-[6px]" stroke="#666"><path d="M0 0l8 8M8 0L0 8" /></svg>
        </button>
      </div>

      <div className="mr-[6px] flex h-[446px] shrink-0 flex-col border-r border-t-2 border-[#6b6b6b]">
        <div className="flex h-[33px] shrink-0 items-center pb-1">
          <Tool name="rack" size="size-4" className="w-4 h-6" />
          <Tool name="funnel" size="size-4" className="ml-[6px] w-6 h-6" />
          <Tool name="funnelOff" size="size-4" className="ml-[1px] w-6 h-6" />
          <Tool name="find" size="size-4" className="ml-[17px] w-6 h-6" />
          <Tool name="help" size="size-[17px]" className="ml-2 w-6 h-6" />
        </div>
        <div className="mb-[3px] mr-1 flex-1 border-r border-t border-r-[#ddd] border-t-[#6b6b6b] bg-white">
          <div className="flex h-5 items-center">
            <span className="flex h-full w-[137px] items-center border-r border-[#ddd] pl-[2px]">Objets</span>
            <span className="flex h-full w-[70px] items-center border-r border-[#ddd] pl-[6px]">Nombre d'...</span>
          </div>
          <div className="flex pl-1">
            <div className="mt-[7px] h-[17px] w-[19px] border-y border-l border-dotted border-black" />
            <ul className="pl-[3px] leading-4">
              <li>Objets du modèle</li>
              <li>Objets auxiliaires</li>
            </ul>
          </div>
        </div>
      </div>

      <div className="mr-[6px] flex h-4 shrink-0 items-start">
        <button className="h-4 w-[66px] bg-white pl-[2px] text-left text-[12px] font-bold leading-4">Géométrie</button>
        <svg viewBox="0 0 9 16" className="h-4 w-[9px]" fill="none"><path d="M0 0h5L1 16H0z" fill="#fff" /><path d="M1 16L6 0M4 6l3 10" stroke="#000" /></svg>
        <button className="h-4 w-[54px] border-t border-black pr-1 text-center leading-[15px]">Groupes</button>
        <svg viewBox="0 0 7 16" className="h-4 w-[7px]"><path d="M1 16L6 0" stroke="#000" strokeWidth="1.500" /></svg>
        <span className="flex-1 border-t border-black" />
      </div>

      <div className="mt-1 flex min-h-0 flex-1 border-t border-[#fff]">
        <div className="mr-[6px] flex flex-1 items-start justify-between border-t-2 border-[#6b6b6b]">
          <table className="w-[216px] table-fixed border-collapse text-[12px]">
            <thead>
              <tr className="h-[19px] bg-[#bfbfbf]">
                <th className="w-[87px] border-b border-r border-[#6b6b6b] p-0 pr-[6px] font-normal leading-4">Nom</th>
                <th className="w-[91px] border-b border-r border-[#6b6b6b] p-0 font-normal leading-4">Valeur</th>
                <th className="border-b border-r border-[#6b6b6b] p-0 font-normal leading-4">Unité</th>
              </tr>
            </thead>
          </table>
          <ScrollColumn className="h-full w-[17px] border-x border-x-white" thumb={<div className="h-full bg-[#cdcdcd]" />} />
        </div>
      </div>
      <div className="mr-[6px] flex h-[18px] shrink-0 items-start">
        <svg viewBox="0 0 13 18" className="h-[18px] w-[13px]"><path d="M0 0h12L7 16H0z" fill="#fff" /><path d="M7 16l5-16" stroke="#000" strokeWidth="1.500" /></svg>
        <span className="flex-1 border-t border-[#6b6b6b]" />
      </div>
      <div className="flex h-[21px] shrink-0 items-start gap-[2px] border-t border-white">
        <button aria-label="Liste" className="-ml-[7px] flex h-[18px] w-[21px] items-center justify-center border-b-2 border-r-2 border-[#555]"><Glyph name="list" className="size-4" /></button>
        {["gusset", "beamT", "layers"].map((n) => (
          <Tool key={n} name={n} size="size-4" className="h-[18px] w-[21px] border-b-2 border-r-2 border-[#555] bg-[#f6f6f6]" />
        ))}
      </div>
    </aside>
  );
}

// model units -> pixels
const STEP = 14.3;
const XS = Array.from({ length: 23 }, (_, i) => (i - 11) * 5);
const YS = Array.from({ length: 13 }, (_, i) => (i - 6) * 5);

function Rulers() {
  return (
    <svg className="pointer-events-none absolute inset-0 h-full w-full font-['Liberation_Serif',serif] text-[24px]" textAnchor="middle">
      <svg x="50%" y="50%" overflow="visible">
        <g transform="translate(1 4)" fill="#666">
          {XS.map((x) => YS.map((y) => <rect key={`${x}/${y}`} x={Math.round(x * STEP)} y={Math.round(-y * STEP)} width="1" height="1" />))}
        </g>
      </svg>
      {["0%", "100%"].map((edge) => (
        <svg key={edge} x="50%" y={edge} overflow="visible">
          {XS.filter((x) => Math.abs(x) < 55).map((x) => {
            const major = x % 10 === 0;
            const px = Math.round(x * STEP) + 1;
            const len = major ? 13 : 9;
            return (
              <g key={x}>
                <rect x={px} y={edge === "0%" ? 0 : -len} width="1" height={len} fill={major ? "#111" : "#555"} />
                {major && <text x={px} y={edge === "0%" ? 34 : -8}>{x.toFixed(1)}</text>}
              </g>
            );
          })}
        </svg>
      ))}
      {["0%", "100%"].map((edge) => (
        <svg key={edge} x={edge} y="50%" overflow="visible">
          {YS.filter((y) => Math.abs(y) < 30).map((y) => {
            const major = y % 10 === 0;
            const py = Math.round(-y * STEP) + 4;
            const len = major ? 12 : 8;
            const left = edge === "0%";
            return (
              <g key={y}>
                <rect x={left ? 0 : -len} y={py} width={len} height="1" fill={major ? "#555" : "#111"} />
                {major && (
                  <text transform={left ? `translate(36 ${py}) rotate(-90)` : `translate(-38 ${py + 1}) rotate(90)`}>{y.toFixed(1)}</text>
                )}
              </g>
            );
          })}
        </svg>
      ))}
    </svg>
  );
}

function AxisPanel() {
  return (
    <div className="absolute bottom-[2px] left-[2px] h-[118px] w-[119px] border border-b-2 border-r-2 border-b-[#555] border-l-[#f5f5f5] border-r-[#555] border-t-[#f5f5f5]">
      <svg viewBox="0 0 116 115" className="absolute left-0 top-0 h-[115px] w-[116px] font-['Liberation_Serif',serif] text-[20px]">
        <path d="M43 28l8 18h-5v27h-6V46h-5z" fill="#fb3535" />
        <path d="M43 69h26v-4l18 7-18 7v-4H43z" fill="#3535fb" />
        <path d="M52.500 36.500h27v27h-27z" fill="none" stroke="#008080" />
        <text x="43" y="29" fill="#f00">Z</text>
        <text x="43" y="73" fill="#008080">Y</text>
        <text x="88" y="73" fill="#00f">X</text>
      </svg>
      <button aria-label="Plan suivant" className="absolute right-[1px] top-[2px] flex size-6 items-center justify-center border border-b-[3px] border-r-[3px] border-b-[#555] border-l-white border-r-[#555] border-t-white">
        <svg viewBox="0 0 20 20" className="size-5" fill="none"><path d="M0 19L10 1l9 18z" stroke="#555" /><path d="M1 19L10 1" stroke="#fff" /></svg>
      </button>
      <button aria-label="Plan précédent" className="absolute bottom-[1px] right-[1px] flex size-6 items-center justify-center border border-b-[3px] border-r-[3px] border-b-[#555] border-l-white border-r-[#555] border-t-white">
        <svg viewBox="0 0 20 20" className="size-5" fill="none"><path d="M1 1l9 18 9-18z" stroke="#555" /></svg>
      </button>
    </div>
  );
}

const DISPLAY_TOGGLES = [
  ["nBar"], ["nLine"], ["n12"], ["supportY", true], ["angle"], ["tripod"], ["slabY", true], ["loadY"], ["n123"], ["swap", true],
];

function Viewport() {
  const [plane, setPlane] = useState(0);
  return (
    <main className="flex min-w-0 flex-1 flex-col border-l-2 border-t-2 border-[#6b6b6b]">
      <div className="flex min-h-0 flex-1">
        <div className="relative min-w-0 flex-1 overflow-hidden border-b border-r border-[#6b6b6b] bg-[#dfdfdf]">
          <AxisPanel />
          <Rulers />
          <div className="absolute right-[14px] top-[79px] h-[6px] w-20 rounded-full bg-linear-to-b from-[#9a9a9a] to-[#dfdfdf] blur-[2px]" />
          <button className="absolute right-[26px] top-[26px] flex size-[54px] items-center justify-center border border-[#a9adb8] bg-linear-to-b from-[#d3d6dcd9] to-[#c4c6cbf2] font-['Liberation_Sans',sans-serif] text-[14px] font-bold text-[#8d9096]">
            AVANT
          </button>
          <div className="absolute bottom-0 left-[569px] flex h-[19px] w-[382px] items-center bg-linear-to-b from-[#f6f6f6] to-[#d2d2d2] text-[12px]">
            <span className="w-[81px] pl-[34px]">XZ</span>
            <span className="flex-1 pl-3">Y = {plane.toFixed(2)} m</span>
            <button aria-label="Monter le plan" onClick={() => setPlane((p) => p + 1)} className="flex h-full w-5 items-center justify-center border-l border-[#777]">
              <svg viewBox="0 0 9 6" className="h-[6px] w-[9px]"><path d="M0 6h9L4.500 0z" fill="#555" /></svg>
            </button>
            <button aria-label="Descendre le plan" onClick={() => setPlane((p) => p - 1)} className="flex h-full w-5 items-center justify-center border-l border-[#777]">
              <svg viewBox="0 0 9 6" className="h-[6px] w-[9px]"><path d="M0 0h9L4.500 6z" fill="#555" /></svg>
            </button>
          </div>
          <div className="absolute bottom-0 right-0 h-[19px] w-[113px] bg-[#ffffff1f] pl-[48px] pt-[2px] font-['Liberation_Sans',sans-serif] text-[11px] text-[#b0b0b0]">Vue</div>
        </div>
        <ScrollColumn className="w-4 border-l border-white" thumb={<div className="absolute top-[38%] h-[24%] w-full bg-[#cdcdcd]" />} />
      </div>
      <div className="flex h-[18px] shrink-0 items-center border-b-2 border-white bg-[#f0f0f0]">
        <div className="flex gap-[2px]">
          {DISPLAY_TOGGLES.map(([name, on]) => (
            <Tool key={name} name={name} size="size-4" className={on ? "h-4 w-[21px] border border-[#1560a8] bg-[#dcebf7]" : "h-4 w-[21px] border border-[#a8a8a8]"} />
          ))}
        </div>
        <span className="ml-[2px] h-4 w-1 border-l border-[#a8a8a8]" />
        <button aria-label="Défiler à gauche" className="ml-[2px] flex w-4 justify-center"><Chevron dir="left" className="size-[9px] text-[#555]" /></button>
        <div className="relative h-4 min-w-0 flex-1">
          <div className="absolute left-[28%] h-full w-[44%] bg-[#cdcdcd]" />
        </div>
        <button aria-label="Défiler à droite" className="flex w-4 justify-center"><Chevron dir="right" className="size-[9px] text-[#555]" /></button>
        <span className="mr-[2px] h-4 w-[6px] border border-[#a8a8a8] border-r-0" />
        <div className="flex gap-[2px]">
          {["axesOff", "wave", "eye"].map((n) => <Tool key={n} name={n} size="size-4" className="h-4 w-[21px] border border-[#a8a8a8]" />)}
        </div>
        <svg viewBox="0 0 10 10" className="ml-[5px] mr-[2px] size-[10px]" fill="#bbb"><path d="M7 0h2v2H7zM4 3h2v2H4zM7 3h2v2H7zM1 7h2v2H1zM4 7h2v2H4zM7 7h2v2H7z" /></svg>
      </div>
    </main>
  );
}

const MODEL_TOOLS = [
  ["axes", "truss", "poly", "extrude", "slabs", "node", "bar", "panel", "thickness", "local", "material"],
  ["section", "plates", "support", "release"],
  ["loads", "loadsOff", "wizard"],
  ["frame3d", "table"],
  ["block"],
];

function ModelTools() {
  return (
    <aside className="w-[25px] shrink-0 overflow-hidden border-b border-t border-b-[#a0a0a0] border-t-[#a0a0a0] bg-white">
      <div className="flex flex-col gap-2 overflow-hidden border-b border-l-2 border-b-[#a0a0a0] border-l-white bg-[#f0f0f0] pl-1">
        {MODEL_TOOLS.map((group, i) => (
          <div key={i} className="flex flex-col">
            {i === 0 && <span className="mb-[2px] mt-[1px] h-[4px] border-b-2 border-dotted border-[#bbb]" />}
            {group.map((t) => <Tool key={t} name={t} className="h-[29px] w-[22px]" />)}
          </div>
        ))}
      </div>
    </aside>
  );
}

function StatusBar() {
  const cell = "flex h-[17px] items-center border-l border-[#d0d0d0]";
  return (
    <footer className="shrink-0">
      <div className="flex h-5 items-center border-b border-[#d4d4d4] bg-[#f0f0f0]">
        <button className="h-4 w-[31px] overflow-hidden bg-white font-['Liberation_Sans',sans-serif] text-[12px] leading-4"><span className="-ml-[17px]">Vue</span></button>
      </div>
      <div className="flex h-[19px] items-center bg-[#f0f0f0] text-[12px]">
        <div className="flex flex-1 items-center">
          <Tool name="snap" size="size-[14px]" className="h-4 w-[11px] overflow-hidden border-r border-[#d4d4d4]" />
          <Tool name="viewHelp" size="size-[14px]" className="mr-1 h-4 w-[18px] border-r border-[#d4d4d4]" />
          {["tiles", "axesOff", "wireCube", "darkCube", "whiteCube"].map((n) => (
            <Tool key={n} name={n} size="size-[14px]" className="h-4 w-[18px] border-r border-[#d4d4d4]" />
          ))}
        </div>
        <div className="flex w-[214px] items-center gap-[6px]">
          <span className="h-3 w-3 rounded-full border border-[#777] bg-radial from-white to-[#b5b5b5]" />
          Résultats MEF: absents
        </div>
        <div className={`${cell} w-9`} />
        <div className={`${cell} w-[50px] pl-2`}>1</div>
        <div className={`${cell} w-[23px] pl-[5px]`}><Glyph name="label" className="size-3" /></div>
        <div className={`${cell} w-[50px] pl-[7px]`}>1</div>
        <div className={`${cell} w-[152px] pl-[9px]`}>TLY_Voile SS0_V53_CT</div>
        <div className={`${cell} w-[198px] gap-2 pl-[7px]`}><Glyph name="coords" className="size-3" />x=-38.59, y=0.00, z=-18.42</div>
        <div className={`${cell} w-[98px] gap-[6px] pl-[5px]`}><Glyph name="dims" className="size-[13px]" />0.00</div>
        <div className={`${cell} w-[87px] whitespace-nowrap pl-[7px]`}>[m] [kN] [Deg]</div>
      </div>
      <div className="h-1 bg-[#1c1c1c]"><div className="ml-[214px] h-full w-9 bg-[#484848]" /></div>
    </footer>
  );
}

export default function App() {
  return (
    <div className="flex h-screen flex-col overflow-hidden bg-white font-['Roboto','Open_Sans',sans-serif] text-black">
      <TitleBar />
      <Toolbars />
      <div className="flex min-h-0 flex-1">
        <ObjectManager />
        <Viewport />
        <ModelTools />
      </div>
      <StatusBar />
    </div>
  );
}
